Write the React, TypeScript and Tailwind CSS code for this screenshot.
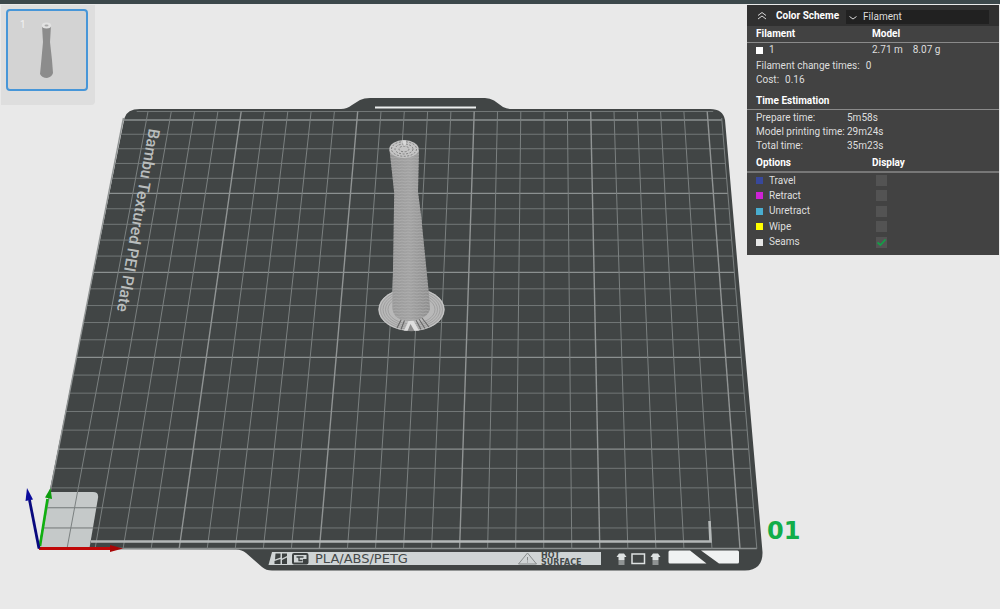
import React, { useState } from 'react';

interface OptionRow {
  label: string;
  swatch: string;
}

const OPTIONS: OptionRow[] = [
  { label: 'Travel', swatch: 'bg-[#38489b]' },
  { label: 'Retract', swatch: 'bg-[#cd22d6]' },
  { label: 'Unretract', swatch: 'bg-[#49adcf]' },
  { label: 'Wipe', swatch: 'bg-[#ffff00]' },
  { label: 'Seams', swatch: 'bg-[#e6e6e6]' },
];

const TIMES = [
  ['Prepare time:', '5m58s'],
  ['Model printing time:', '29m24s'],
  ['Total time:', '35m23s'],
];

// Bed grid, one step is 10mm. Screen y of a row follows the camera perspective.
const rowY = (v: number) => (548.5 - 16.14 * v) / (1 + 0.00834 * v);
const colX = (u: number, y: number) => {
  const t = (548.5 - y) / 437;
  return (39 + 28.04 * u) * (1 - t) + (124.7 + 23.3 * u) * t;
};
const STEPS = [...Array(26).keys(), 25.6];

const BedGrid = () => (
  <g fill="none">
    {STEPS.map((v) => {
      const y = rowY(v);
      const major = v % 5 === 0;
      return (
        <path
          key={`r${v}`}
          d={`M${colX(0, y) + (v > 25 ? 12 : 0)} ${y}H${colX(25.6, y) - (v > 25 ? 8 : 0)}`}
          stroke={major ? '#8b9090' : '#727777'}
          strokeWidth={major ? 1.3 : 1}
        />
      );
    })}
    {STEPS.map((u) => {
      const major = u % 5 === 0;
      const top = u === 0 || u > 25 ? 118 : 111.5;
      return (
        <path
          key={`c${u}`}
          d={`M${colX(u, 548.5)} 548.5L${colX(u, top)} ${top}`}
          stroke={major ? '#909494' : '#7b8080'}
          strokeWidth={major ? 1.4 : 1}
        />
      );
    })}
  </g>
);

const PlateLabels = () => (
  <g>
    <path d="M272 552H601V565H268.500Z" fill="#cfd4d5" />
    {/* Brand mark */}
    <path d="M275.500 553.500H280.500V557.500L275 559.500ZM282 553.500H287V556L282 558.500ZM274.500 561L280.500 559V564H274.500ZM282 560L287 557.500V564H282Z" fill="#3c4141" />
    <rect x="293" y="554" width="14.500" height="9.500" rx="1" fill="none" stroke="#3c4141" strokeWidth="2" />
    <path d="M296.500 557H303.500M299 557V560.500H302.500" fill="none" stroke="#3c4141" strokeWidth="1.300" />
    <path d="M303 559H307V563.500H303Z" fill="#3c4141" />
    <text x="315" y="563" fontSize="13" fill="#454a4a" className="font-['DejaVu_Sans']">PLA/ABS/PETG</text>
    <path d="M527.500 553L536.500 564H518.500ZM527.500 557v3.500M527.500 561.500v1" fill="none" stroke="#868b8b" strokeWidth="1" />
    <text fontSize="8" fill="#454a4a" className="font-['DejaVu_Sans'] font-bold">
      <tspan x="541" y="558">HOT</tspan>
      <tspan x="541" y="565">SURFACE</tspan>
    </text>
    <g fill="#dde1e1">
      <path d="M619 553.500h5l2.500 3.500H624.500v3.500h-6v-3.500H616.500ZM618.500 561.500h6v1h-6zM618.500 563.500h6v1h-6z" />
      <path d="M653 553.500h5l2.500 3.500H658.500v3.500h-6v-3.500H650.500ZM652.500 561.500h6v1h-6zM652.500 563.500h6v1h-6z" />
    </g>
    <rect x="632" y="554" width="12.500" height="9.500" fill="none" stroke="#dde1e1" strokeWidth="1.500" />
    <path d="M670 550.500H690L706.500 563.500H670Q668.500 563.500 668.500 562V552Q668.500 550.500 670 550.500ZM701 550.500H737.500Q739 550.500 739 552V562Q739 563.500 737.500 563.500H719Z" fill="#f0f2f2" />
  </g>
);

const BODY =
  'M389.500 150L392.500 177L394.200 193L393.500 240L392.300 308Q393 317 402 320Q411 322.500 420 319Q429 315 430 309L428.500 290L421 215L418 192L419 150Z';

const PrintedModel = () => (
  <g>
    <ellipse cx="411.500" cy="309.500" rx="33" ry="21.500" fill="#b9b9b9" />
    <g fill="none" stroke="#8f8f8f" strokeWidth="0.600">
      <ellipse cx="411.500" cy="309.500" rx="31" ry="19.800" />
      <ellipse cx="411.500" cy="309.500" rx="28.500" ry="18" />
      <ellipse cx="411.500" cy="309.500" rx="26" ry="16.200" />
      <ellipse cx="411.500" cy="309.500" rx="23.500" ry="14.400" />
      <ellipse cx="411.500" cy="309.500" rx="32.700" ry="21.200" stroke="#d6d6d6" />
    </g>
    <path d="M402 318L397 328M405 319L401 329.500M416 320L421 329.500M419 319L425 328.500M422 318L429 327" stroke="#686868" strokeWidth="1.100" />
    <path d="M409 320h4l6 10.500h-15z" fill="#dedede" />
    <path d="M410.500 324l4 7h-7z" fill="#8c8c8c" />
    <path d={BODY} fill="url(#body)" />
    <path d={BODY} fill="url(#layers)" />
    <ellipse cx="404" cy="149" rx="14.700" ry="9" fill="#c5c5c5" />
    <g fill="none" stroke="#777" strokeWidth="0.900" strokeDasharray="2 1.500">
      <ellipse cx="404" cy="149" rx="12.500" ry="7.300" />
      <ellipse cx="404" cy="149" rx="9" ry="5" />
      <ellipse cx="404" cy="149" rx="5" ry="2.800" />
    </g>
    <path d="M402 140.500h4v4l-2 1.500z" fill="#d8d8d8" />
  </g>
);

const AxisGizmo = () => (
  <g>
    <path d="M40 546L47.500 499" stroke="#10b010" strokeWidth="2.600" />
    <path d="M50.500 488L52 499L45 497.500Z" fill="#0d9c0d" />
    <path d="M39 548.500H112" stroke="#c00808" strokeWidth="2.800" />
    <path d="M110 545L123 548.500L110 552Z" fill="#a90606" />
    <path d="M39 548.500L29.500 500" stroke="#08087e" strokeWidth="2.800" />
    <path d="M27 488L33 499.500L25.500 501Z" fill="#0b0b9c" />
  </g>
);

const BuildPlate = () => (
  <svg className="absolute inset-0 h-full w-full" viewBox="0 4 1000 605" preserveAspectRatio="xMidYMid slice" role="img" aria-label="Build plate">
    <defs>
      <linearGradient id="body" x1="0" x2="1" y1="0" y2="0">
        <stop offset="0" stopColor="#979797" />
        <stop offset="0.500" stopColor="#a3a3a3" />
        <stop offset="1" stopColor="#8e8e8e" />
      </linearGradient>
      <pattern id="layers" width="6" height="3" patternUnits="userSpaceOnUse">
        <path d="M0 1Q3 3 6 1" fill="none" stroke="#b3b3b3" strokeWidth="0.600" />
      </pattern>
    </defs>
    <path
      d="M38 549L124.500 118Q127 109 140 109H341Q347 109 352 105L360 100Q364 98 370 98H485Q490 98 494 100.500L503 107Q507 109 512 109H710Q723 109 725 120L762.500 552Q763 570 745 570.500H272Q266 570.500 262 567L246 553Q242 549.500 236 549.500Z"
      fill="#414545"
    />
    <rect x="375" y="106.500" width="101" height="2" fill="#eceeee" />
    <path d="M50 492H93Q99 492 98 498L89.500 548H39Z" fill="#c5c9c9" />
    <BedGrid />
    <path d="M91 541.500H710.500L709.500 521" fill="none" stroke="#b4b8b8" strokeWidth="2.600" />
    <text transform="translate(149 128) rotate(100)" fontSize="16" fill="#b9bdbd" className="font-['Roboto',sans-serif] font-medium">
      Bambu Textured PEI Plate
    </text>
    <PlateLabels />
    <PrintedModel />
    <AxisGizmo />
    <text x="767" y="539" fontSize="24" fill="#12ad49" className="font-['DejaVu_Sans'] font-bold">01</text>
  </svg>
);

const PlateThumbnail = () => (
  <aside className="ml-px rounded-br bg-[#dedede] pt-1 pr-[7px] pb-[14px] pl-[5px]">
    <button type="button" className="relative block h-[82px] w-[82px] rounded border-2 border-[#4796d8] bg-[#d3d3d3]" aria-label="Plate 1">
      <span className="absolute top-2 left-3 text-[10px] leading-3 text-[#f2f2f2]">1</span>
      <svg className="h-full w-full" viewBox="8 11 78 78">
        <path d="M42 25L42.500 34L43 42L41 64L40 74Q42 78 47 78Q52 77 53 73L52 60L50 42L50.500 34L51 25Z" fill="#8c8c8c" />
        <ellipse cx="46.500" cy="25.500" rx="4.700" ry="3" fill="#e2e2e2" />
        <ellipse cx="46.500" cy="25.500" rx="2" ry="1" fill="#aaa" />
      </svg>
    </button>
  </aside>
);

const LegendPanel = () => {
  const [shown, setShown] = useState<string[]>(['Seams']);

  const toggle = (label: string) =>
    setShown((prev) => (prev.includes(label) ? prev.filter((l) => l !== label) : [...prev, label]));

  return (
    <section className="mr-px w-[252px] bg-[#424242] pb-[5px] text-[10px] leading-[14px] text-[#dedede]">
      {/* Header */}
      <div className="flex h-[21px] items-center bg-[#303030] pr-[10px] pl-[9px]">
        <button type="button" aria-label="Collapse" className="w-5">
          <svg className="h-3 w-3" viewBox="0 0 12 12" fill="none" stroke="#d8d8d8" strokeWidth="1">
            <path d="M2 5.500L6 2.500L10 5.500M2 9L6 6L10 9" />
          </svg>
        </button>
        <label htmlFor="scheme" className="mr-[7px] font-bold text-white">Color Scheme</label>
        <div className="relative mt-[3px] flex-1">
          <svg className="pointer-events-none absolute top-[3px] left-[2px] h-2 w-[10px]" viewBox="0 0 10 8" fill="none" stroke="#d8d8d8">
            <path d="M1.500 3.500L5 6L8.500 3.500" />
          </svg>
          <select id="scheme" className="block h-[14px] w-full appearance-none bg-[#212121] pl-[17px] leading-[14px] text-[#dedede]">
            <option>Filament</option>
          </select>
        </div>
      </div>

      {/* Filament usage */}
      <table className="w-full table-fixed border-collapse text-left">
        <thead>
          <tr className="h-4 border-b border-[#8a8a8a] text-white">
            <th className="w-[125px] p-0 pl-[9px] font-bold">Filament</th>
            <th className="p-0 font-bold">Model</th>
          </tr>
        </thead>
        <tbody>
          <tr className="h-4">
            <td className="p-0 pl-[9px]">
              <span className="flex items-center gap-[6px]">
                <i className="h-[7px] w-[7px] bg-white" />
                <span>1</span>
              </span>
            </td>
            <td className="p-0"><span className="mr-[10px]">2.71 m</span>8.07 g</td>
          </tr>
        </tbody>
      </table>
      <p className="mt-px pl-[9px]">Filament change times:<span className="ml-[6px]">0</span></p>
      <p className="pl-[9px]">Cost:<span className="ml-[6px]">0.16</span></p>

      {/* Time */}
      <h2 className="mt-[6px] h-[17px] border-b border-[#8a8a8a] pl-[9px] leading-4 font-bold text-white">Time Estimation</h2>
      <dl className="grid grid-cols-[91px_1fr] pt-px pl-[9px]">
        {TIMES.map(([name, value]) => (
          <React.Fragment key={name}>
            <dt className="whitespace-nowrap">{name}</dt>
            <dd>{value}</dd>
          </React.Fragment>
        ))}
      </dl>

      {/* Options */}
      <table className="mt-[2px] w-full table-fixed border-collapse text-left">
        <thead>
          <tr className="h-[17px] border-b-2 border-[#777777] text-white">
            <th className="w-[125px] p-0 pl-[9px] font-bold">Options</th>
            <th className="p-0 font-bold">Display</th>
          </tr>
        </thead>
        <tbody>
          {OPTIONS.map(({ label, swatch }) => (
            <tr key={label} className="h-4 even:h-[15px]">
              <td className="p-0 pl-[9px]">
                <label htmlFor={`show-${label}`} className="flex items-center gap-[6px]">
                  <i className={`h-[7px] w-[7px] ${swatch}`} />
                  {label}
                </label>
              </td>
              <td className="p-0 pl-[4px]">
                <span className="relative block h-[11px] w-[11px]">
                  <input
                    id={`show-${label}`}
                    type="checkbox"
                    checked={shown.includes(label)}
                    onChange={() => toggle(label)}
                    className="peer block h-[11px] w-[11px] appearance-none bg-[#535353]"
                  />
                  <svg className="pointer-events-none absolute inset-0 hidden h-full w-full peer-checked:block" viewBox="0 0 11 11" fill="none" stroke="#12a047" strokeWidth="1.800">
                    <path d="M1.500 5.500L4.500 8L9.500 2.500" />
                  </svg>
                </span>
              </td>
            </tr>
          ))}
        </tbody>
      </table>
    </section>
  );
};

export default function App() {
  return (
    <div className="flex min-h-screen flex-col bg-[#e9e9e9] font-['Roboto',sans-serif]">
      <header className="h-1 bg-[#3c484b]" />
      <main className="relative flex-1">
        <BuildPlate />
        <div className="relative flex items-start justify-between pt-px">
          <PlateThumbnail />
          <LegendPanel />
        </div>
      </main>
    </div>
  );
}
